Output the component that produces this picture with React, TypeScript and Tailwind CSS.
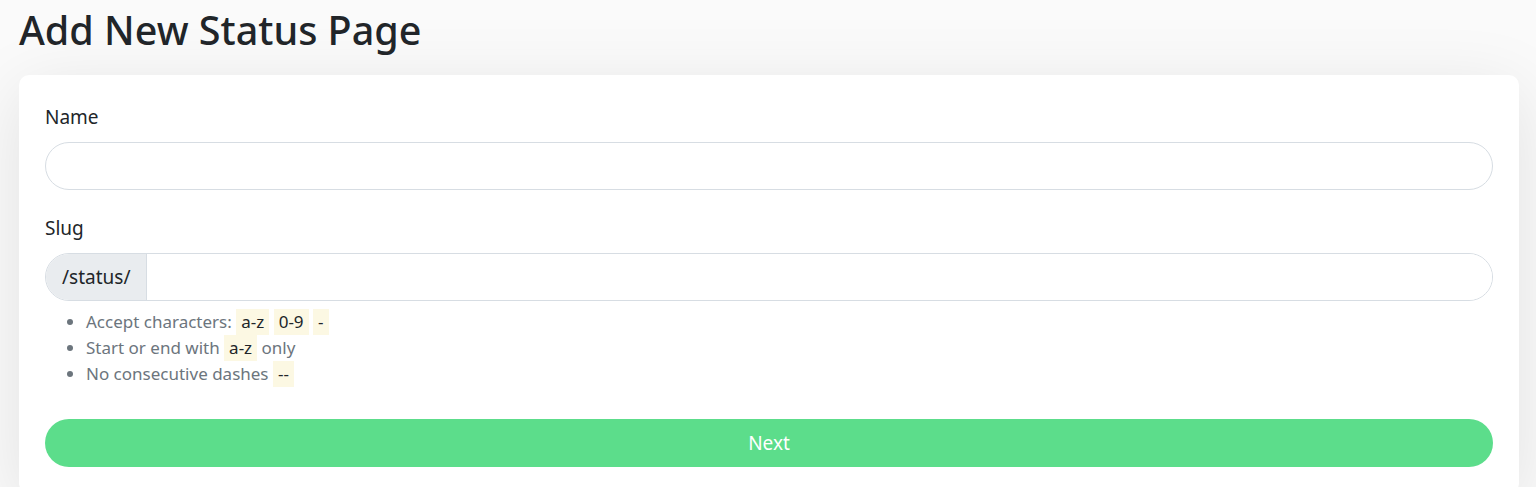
import React from 'react'

const Code = ({ children }: { children: React.ReactNode }) => (
  <span className="inline-block bg-[#fcf8e3] px-[5px] leading-[26px] text-[#212529]">{children}</span>
)

const App = () => {
  return (
    <div className="h-[487px] overflow-hidden bg-[#fafafa] pl-[19px] pr-[17px] font-['Noto_Sans','Open_Sans',sans-serif] text-[#212529]">
      <h1 className="pt-[5px] pb-[20px] text-[39.5px] font-medium leading-[50px]">Add New Status Page</h1>

      <div className="rounded-[10px] bg-white px-[26px] pt-[26px] pb-[26px] shadow-[0_15px_70px_rgba(0,0,0,0.1)]">
        <div className="mb-[9px] text-[19px] leading-[32px]">Name</div>
        <input className="h-[48px] w-full rounded-full border border-[#d7dde3] bg-white px-[18px] text-[19px] outline-none" />

        <div className="mt-[22px] mb-[9px] text-[19px] leading-[32px]">Slug</div>
        <div className="flex h-[48px] w-full overflow-hidden rounded-full border border-[#d7dde3]">
          <span className="flex items-center border-r border-[#d7dde3] bg-[#e9ecef] pl-[16px] pr-[16px] text-[19px]">/status/</span>
          <input className="flex-1 bg-white px-[14px] text-[19px] outline-none" />
        </div>

        <ul className="mt-[8px] list-disc pl-[41px] text-[17px] leading-[26px] text-[#6c757d] marker:text-[#6c757d]">
          <li>
            Accept characters: <Code>a-z</Code> <Code>0-9</Code> <Code>-</Code>
          </li>
          <li>
            Start or end with <Code>a-z</Code> only
          </li>
          <li>
            No consecutive dashes <Code>--</Code>
          </li>
        </ul>

        <button className="mt-[32px] h-[48px] w-full rounded-full bg-[#5cdd8b] text-[19px] text-white">Next</button>
      </div>
    </div>
  )
}

export default App
